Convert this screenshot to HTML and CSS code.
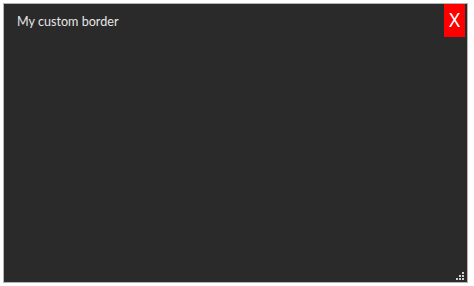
FILE: index.html
```html
<!DOCTYPE html>
<html>
<head>
<meta charset="utf-8">
<link rel="stylesheet" href="styles.css">
</head>
<body>
<div class="window">
  <div class="titlebar">
    <span class="title">My custom border</span>
    <div class="close">X</div>
  </div>
  <div class="content"></div>
  <svg class="grip" width="9" height="9" viewBox="0 0 9 9">
    <g fill="#d0d0d0">
      <rect x="6" y="0" width="2" height="2"/>
      <rect x="3" y="3" width="2" height="2"/>
      <rect x="6" y="3" width="2" height="2"/>
      <rect x="0" y="6" width="2" height="2"/>
      <rect x="3" y="6" width="2" height="2"/>
      <rect x="6" y="6" width="2" height="2"/>
    </g>
  </svg>
</div>
</body>
</html>
```
FILE: styles.css
```css
html, body {
  margin: 0;
  padding: 0;
  background: #ffffff;
}
body {
  padding: 3px 6px 3px 3px;
  font-family: "Noto Sans", "Open Sans", sans-serif;
}
.window {
  position: relative;
  box-sizing: border-box;
  width: 465px;
  height: 280px;
  border: 1px solid #b4b4b4;
  background: #2a2a2a;
  display: flex;
  flex-direction: column;
}
.titlebar {
  display: flex;
  justify-content: space-between;
  align-items: flex-start;
  padding-left: 13px;
  padding-right: 2px;
}
.title {
  font-family: Lato, "Noto Sans", sans-serif;
  color: #e6e6e6;
  font-size: 12.6px;
  line-height: 16px;
  margin-top: 10px;
}
.close {
  width: 21px;
  height: 33px;
  background: #ff0000;
  color: #ffffff;
  font-size: 19px;
  line-height: 33px;
  text-align: center;
}
.content {
  flex: 1;
}
.grip {
  position: absolute;
  right: 2px;
  bottom: 1px;
}
```
